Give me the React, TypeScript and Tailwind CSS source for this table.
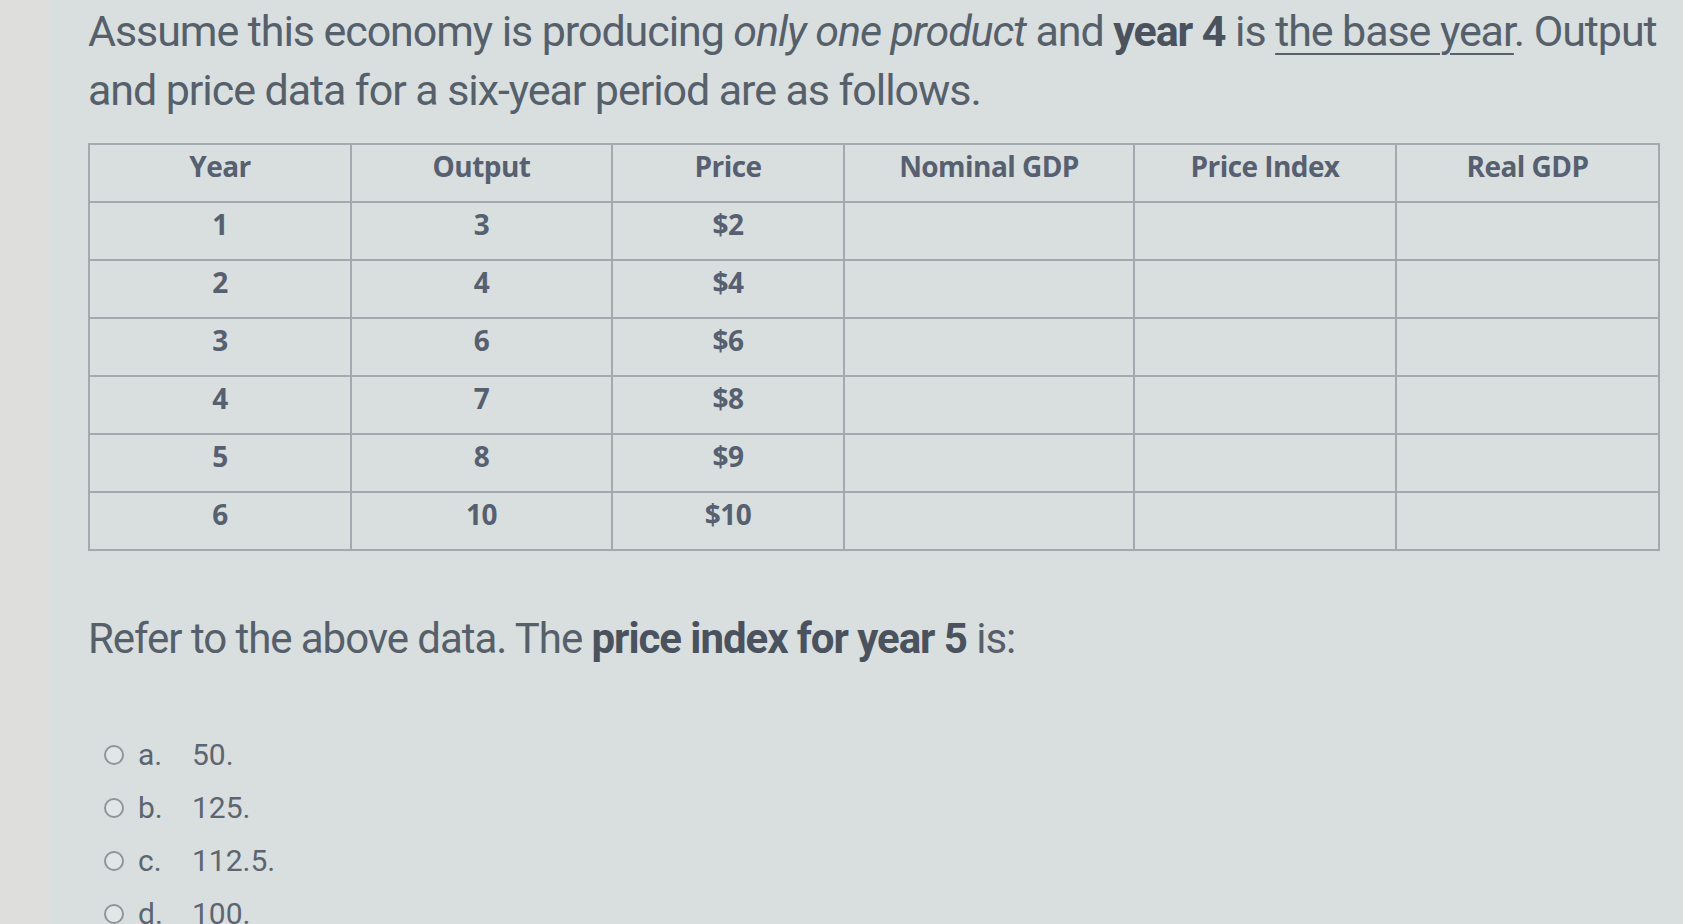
import React from "react";

const HEADERS = ["Year", "Output", "Price", "Nominal GDP", "Price Index", "Real GDP"];

const ROWS = [
  { year: "1", output: "3", price: "$2" },
  { year: "2", output: "4", price: "$4" },
  { year: "3", output: "6", price: "$6" },
  { year: "4", output: "7", price: "$8" },
  { year: "5", output: "8", price: "$9" },
  { year: "6", output: "10", price: "$10" },
];

const OPTIONS = [
  { label: "a.", value: "50." },
  { label: "b.", value: "125." },
  { label: "c.", value: "112.5." },
  { label: "d.", value: "100." },
];

const App: React.FC = () => {
  return (
    <div className="flex h-[924px] w-full overflow-hidden bg-[#d8dfde] font-['Roboto',sans-serif] text-[#56606b]">
      {/* strip on the left edge of the screen */}
      <div className="w-[50px] shrink-0 bg-[#dedfdc]" />

      <div className="flex-1 pl-[38px] pt-[2px]">
        <p className="w-[1600px] text-[43px] leading-[59px] tracking-[-0.025em]">
          Assume this economy is producing <em>only one product</em> and{" "}
          <strong className="font-bold text-[#4a525d]">year 4</strong> is{" "}
          <span className="underline decoration-2 underline-offset-[7px]">the base year</span>. Output and price
          data for a six-year period are as follows.
        </p>

        <table className="mt-[23px] w-[1570px] table-fixed border-collapse font-['Open_Sans',sans-serif] text-[28px] font-bold tracking-[-0.02em] text-[#566070]">
          <colgroup>
            <col className="w-[262px]" />
            <col className="w-[261px]" />
            <col className="w-[232px]" />
            <col className="w-[290px]" />
            <col className="w-[262px]" />
            <col className="w-[263px]" />
          </colgroup>
          <thead>
            <tr className="h-[57px]">
              {HEADERS.map((h) => (
                <th key={h} className="border-2 border-[#a2aab0] pb-[14px] text-center font-bold">
                  {h}
                </th>
              ))}
            </tr>
          </thead>
          <tbody>
            {ROWS.map((r) => (
              <tr key={r.year} className="h-[58px]">
                <td className="border-2 border-[#a2aab0] pb-[14px] text-center">{r.year}</td>
                <td className="border-2 border-[#a2aab0] pb-[14px] text-center">{r.output}</td>
                <td className="border-2 border-[#a2aab0] pb-[14px] text-center">{r.price}</td>
                <td className="border-2 border-[#a2aab0]" />
                <td className="border-2 border-[#a2aab0]" />
                <td className="border-2 border-[#a2aab0]" />
              </tr>
            ))}
          </tbody>
        </table>

        <p className="mt-[58px] text-[42px] leading-[59px] tracking-[-0.025em]">
          Refer to the above data. The{" "}
          <strong className="font-bold text-[#4a525d]">price index for year 5</strong> is:
        </p>

        <div className="mt-[60px] flex flex-col">
          {OPTIONS.map((o) => (
            <label key={o.label} className="flex h-[53px] items-center text-[30px] text-[#5d6570]">
              <span className="ml-[16px] h-[20px] w-[20px] shrink-0 rounded-full border-2 border-[#8e959b] bg-[#e2e6e6]" />
              <span className="ml-[14px] w-[54px]">{o.label}</span>
              <span>{o.value}</span>
            </label>
          ))}
        </div>
      </div>
    </div>
  );
};

export default App;
